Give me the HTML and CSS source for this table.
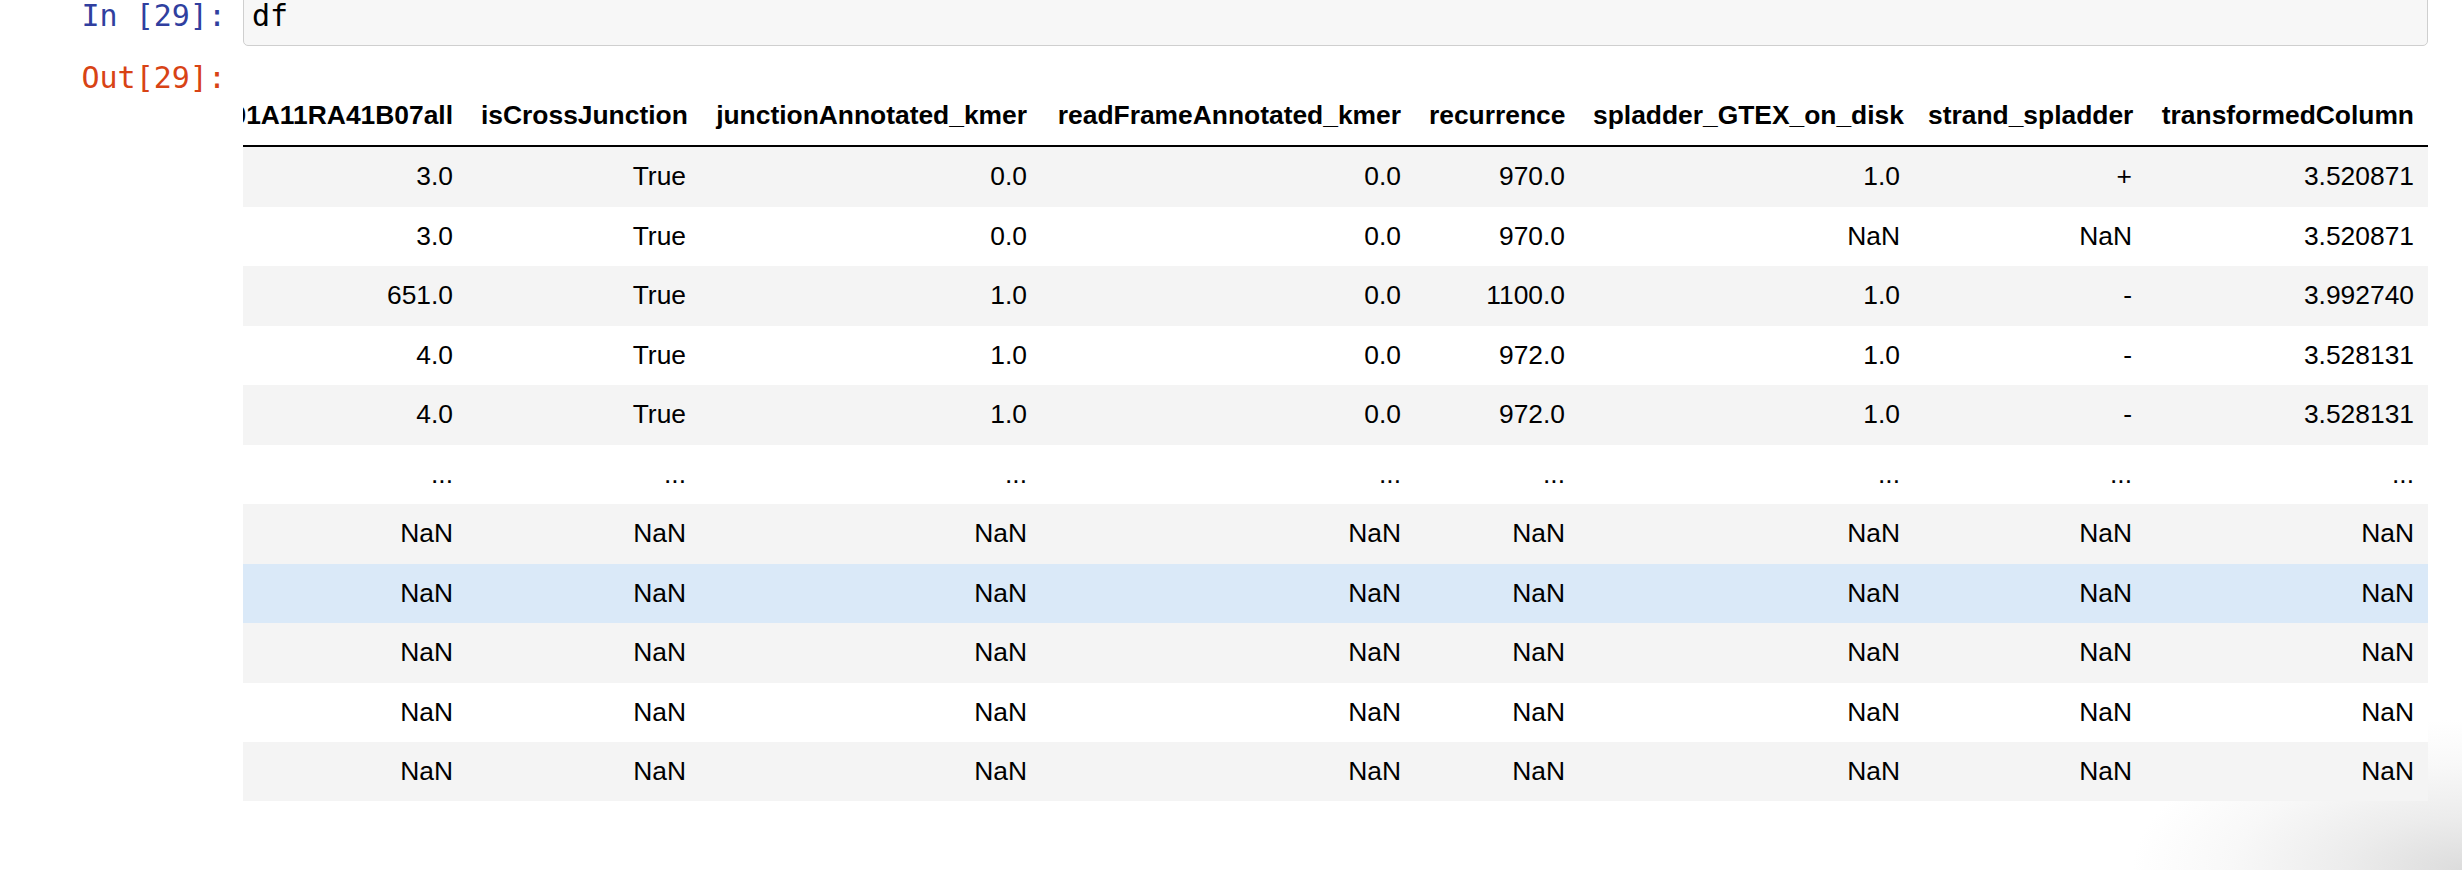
FILE: index.html
```html
<!DOCTYPE html>
<html>
<head>
<meta charset="utf-8">
<link rel="stylesheet" href="styles.css">
</head>
<body>
<div class="notebook">
  <div class="cell">
    <div class="row input-row">
      <div class="prompt prompt-in">In&nbsp;[29]:</div>
      <div class="input-area"><pre class="code">df</pre></div>
    </div>
    <div class="row output-row">
      <div class="prompt prompt-out">Out[29]:</div>
      <div class="output-area">
        <div class="df-scroll">
          <table class="dataframe">
            <colgroup>
              <col class="c-a"><col class="c-cross"><col class="c-junc"><col class="c-read"><col class="c-rec"><col class="c-spl"><col class="c-strand"><col class="c-trans">
            </colgroup>
            <thead>
              <tr><th>TCGAA2A0T201A11RA41B07all</th><th>isCrossJunction</th><th>junctionAnnotated_kmer</th><th>readFrameAnnotated_kmer</th><th>recurrence</th><th>spladder_GTEX_on_disk</th><th>strand_spladder</th><th>transformedColumn</th></tr>
            </thead>
            <tbody>
              <tr><td>3.0</td><td>True</td><td>0.0</td><td>0.0</td><td>970.0</td><td>1.0</td><td>+</td><td>3.520871</td></tr>
              <tr><td>3.0</td><td>True</td><td>0.0</td><td>0.0</td><td>970.0</td><td>NaN</td><td>NaN</td><td>3.520871</td></tr>
              <tr><td>651.0</td><td>True</td><td>1.0</td><td>0.0</td><td>1100.0</td><td>1.0</td><td>-</td><td>3.992740</td></tr>
              <tr><td>4.0</td><td>True</td><td>1.0</td><td>0.0</td><td>972.0</td><td>1.0</td><td>-</td><td>3.528131</td></tr>
              <tr><td>4.0</td><td>True</td><td>1.0</td><td>0.0</td><td>972.0</td><td>1.0</td><td>-</td><td>3.528131</td></tr>
              <tr><td>...</td><td>...</td><td>...</td><td>...</td><td>...</td><td>...</td><td>...</td><td>...</td></tr>
              <tr><td>NaN</td><td>NaN</td><td>NaN</td><td>NaN</td><td>NaN</td><td>NaN</td><td>NaN</td><td>NaN</td></tr>
              <tr class="hover"><td>NaN</td><td>NaN</td><td>NaN</td><td>NaN</td><td>NaN</td><td>NaN</td><td>NaN</td><td>NaN</td></tr>
              <tr><td>NaN</td><td>NaN</td><td>NaN</td><td>NaN</td><td>NaN</td><td>NaN</td><td>NaN</td><td>NaN</td></tr>
              <tr><td>NaN</td><td>NaN</td><td>NaN</td><td>NaN</td><td>NaN</td><td>NaN</td><td>NaN</td><td>NaN</td></tr>
              <tr><td>NaN</td><td>NaN</td><td>NaN</td><td>NaN</td><td>NaN</td><td>NaN</td><td>NaN</td><td>NaN</td></tr>
            </tbody>
          </table>
        </div>
      </div>
    </div>
  </div>
</div>
</body>
</html>
```

FILE: styles.css
```css
html {
  background: #fff;
  min-height: 100%;
}
body {
  margin: 0;
  height: 870px;
  overflow: hidden;
  background: radial-gradient(ellipse 330px 150px at 100% 100%, #dcdcdc 0%, #ececec 35%, #f8f8f8 70%, rgba(255,255,255,0) 100%);
}
.notebook {
  margin-top: -15px;
  padding-right: 34px;
}
.row {
  display: flex;
}
.input-row {
  align-items: baseline;
}
.output-row {
  align-items: flex-start;
  margin-top: 13px;
}
.prompt {
  flex: 0 0 243px;
  box-sizing: border-box;
  padding-right: 17px;
  text-align: right;
  font-family: "DejaVu Sans Mono", monospace;
  font-size: 30px;
  line-height: 37px;
  white-space: nowrap;
}
.prompt-in {
  color: #303f9f;
}
.prompt-out {
  color: #d84315;
}
.input-area {
  flex: 1 1 auto;
  background: #f7f7f7;
  border: 1px solid #cfcfcf;
  border-radius: 5px;
  padding: 11px 8px;
}
.code {
  margin: 0;
  font-family: "DejaVu Sans Mono", monospace;
  font-size: 30px;
  line-height: 37px;
  color: #000;
}
.output-area {
  flex: 1 1 auto;
  min-width: 0;
  padding-top: 27px;
}
.df-scroll {
  overflow: hidden;
}
.dataframe {
  margin-left: -236px;
  table-layout: fixed;
  width: 2421px;
  border-collapse: separate;
  border-spacing: 0;
  font-family: "Liberation Sans", Arial, sans-serif;
  font-size: 26.4px;
  color: #000;
}
.c-a { width: 460px; }
.c-cross { width: 233px; }
.c-junc { width: 341px; }
.c-read { width: 374px; }
.c-rec { width: 164px; }
.c-spl { width: 335px; }
.c-strand { width: 232px; }
.c-trans { width: 282px; }
.dataframe th,
.dataframe td {
  text-align: right;
  vertical-align: middle;
  padding: 13px 14px;
  line-height: 33.45px;
  white-space: nowrap;
  overflow: visible;
}
.dataframe th {
  font-weight: bold;
  border-bottom: 2px solid #000;
}
.dataframe tbody tr:nth-child(odd) {
  background: #f4f4f4;
}
.dataframe tbody tr:nth-child(even) {
  background: #fff;
}
.dataframe tbody tr.hover {
  background: #dae9f8;
}
```
